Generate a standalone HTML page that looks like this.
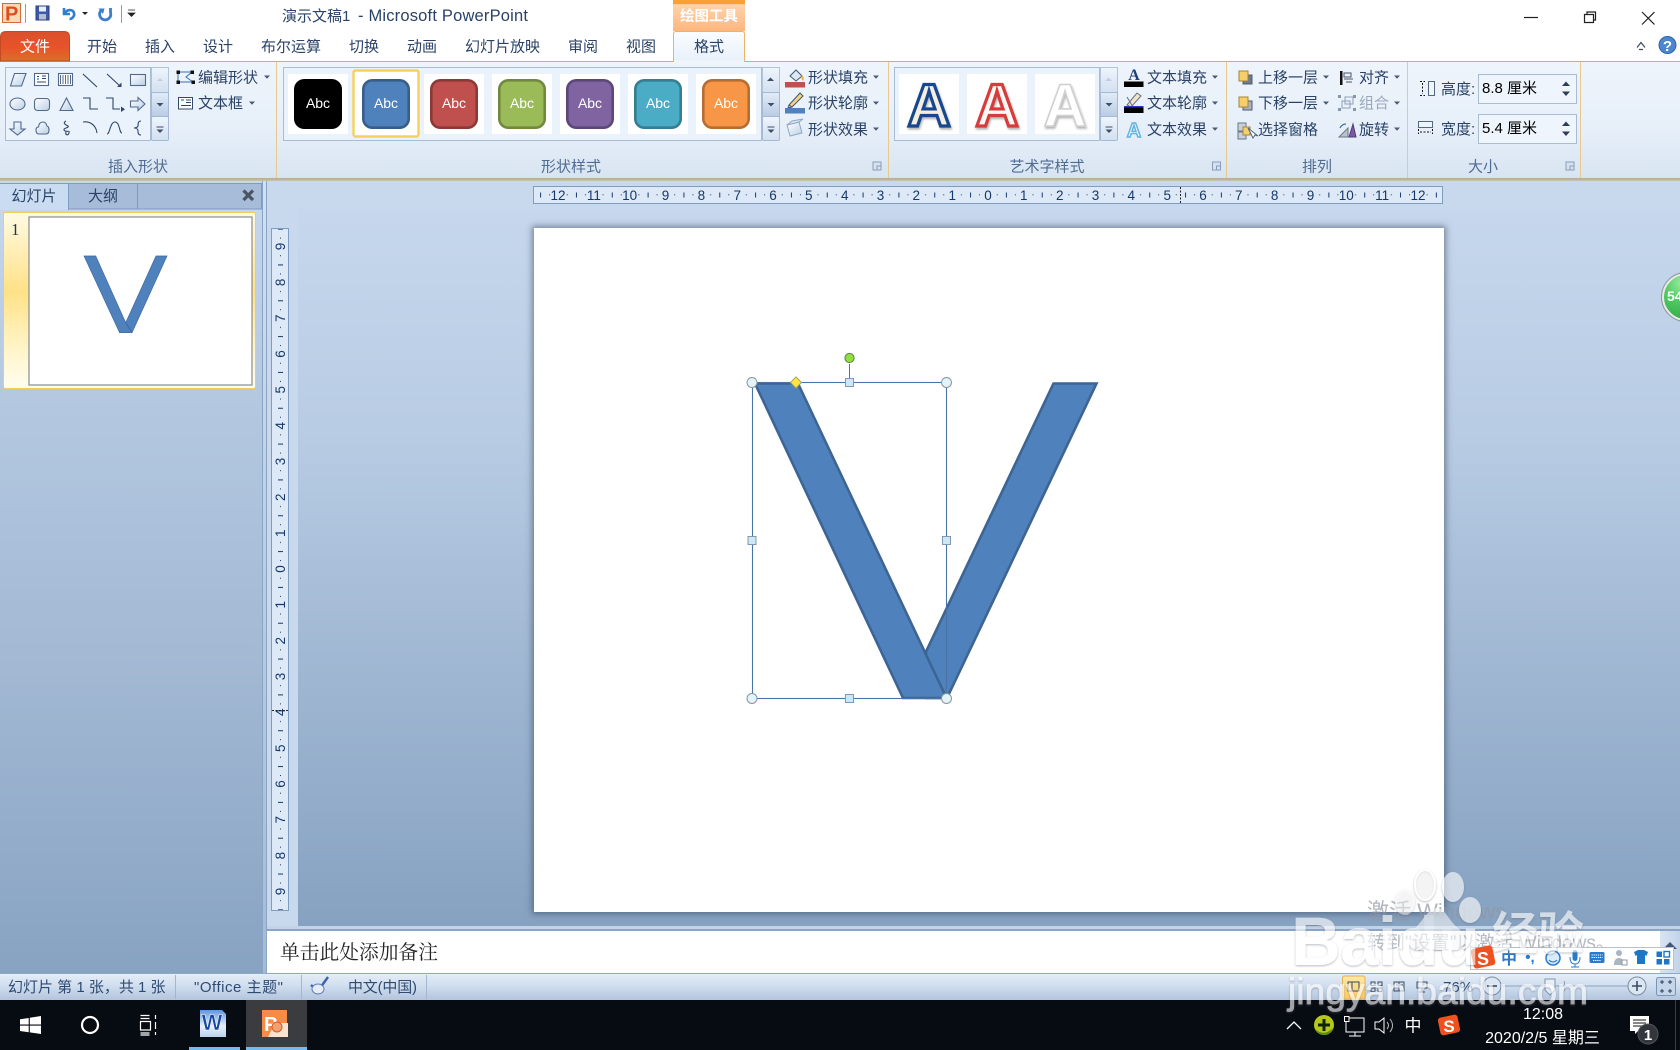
<!DOCTYPE html>
<html lang="zh-CN">
<head>
<meta charset="utf-8">
<title>演示文稿1 - Microsoft PowerPoint</title>
<style>
html,body{margin:0;padding:0;width:1680px;height:1050px;overflow:hidden;background:#fff}
.a{position:absolute}
svg{position:absolute;left:0;top:0}
text{font-family:"Liberation Sans","Noto Sans CJK SC",sans-serif;font-size:15px;fill:#2a4266}
.m{text-anchor:middle}
.lab{fill:#4f6c92;text-anchor:middle}
.rul{fill:#17386a;font-size:13.5px;text-anchor:middle}
.abc{fill:#fff;font-size:14px;text-anchor:middle}
.st{fill:#2f4b72;font-size:15px}
.wh{fill:#fff}
</style>
</head>
<body>
<!-- backgrounds -->
<div class="a" style="left:0;top:0;width:1680px;height:61px;background:#fff"></div>
<div class="a" style="left:0;top:61px;width:1680px;height:117px;background:linear-gradient(#eef4fb,#e6eff9 60%,#d8e4f1);border-top:1px solid #e9a94a;box-sizing:border-box"></div>
<div class="a" style="left:0;top:178px;width:1680px;height:4px;background:linear-gradient(#b9ab90,#c4b79f 50%,#c6d6ea)"></div>
<div class="a" style="left:0;top:181px;width:262px;height:793px;background:linear-gradient(#c6d8ee,#b5c9e1 25%,#a3b9d4 60%,#87a3c2)"></div>
<div class="a" style="left:262px;top:181px;width:5px;height:793px;background:linear-gradient(#d2e0f1,#a6bad3);border-left:1px solid #8aa4c6;border-right:1px solid #8aa4c6;box-sizing:border-box"></div>
<div class="a" style="left:267px;top:181px;width:1413px;height:746px;background:linear-gradient(#c8d9ee,#b7cbe3 35%,#9cb4d0 70%,#86a2c1)"></div>
<div class="a" style="left:267px;top:181px;width:1413px;height:27px;background:#c8d9ee"></div>
<div class="a" style="left:267px;top:181px;width:31px;height:746px;background:#c8d9ee"></div>
<div class="a" style="left:534px;top:228px;width:910px;height:684px;background:#fff;box-shadow:0 0 6px 2px rgba(40,55,80,.5)"></div>
<div class="a" style="left:267px;top:926px;width:1413px;height:5px;background:#c3d3e7;border-bottom:2px solid #89a4c7;box-sizing:border-box"></div>
<div class="a" style="left:267px;top:931px;width:1393px;height:42px;background:#fff"></div>
<div class="a" style="left:1660px;top:931px;width:20px;height:42px;background:linear-gradient(90deg,#d8e4f2,#c3d4e8)"></div>
<div class="a" style="left:0;top:973px;width:1680px;height:27px;background:linear-gradient(#e5edf7,#d0deef 45%,#b2c5dd);border-top:1px solid #8fa9ca;box-sizing:border-box"></div>
<div class="a" style="left:0;top:1000px;width:1680px;height:50px;background:#070b12"></div>

<svg width="1680" height="1050" viewBox="0 0 1680 1050">
<defs>
<linearGradient id="gf" x1="0" y1="0" x2="0" y2="1"><stop offset="0" stop-color="#d9512c"/><stop offset=".55" stop-color="#e8532a"/><stop offset="1" stop-color="#dc6f27"/></linearGradient>
<linearGradient id="gc" x1="0" y1="0" x2="0" y2="1"><stop offset="0" stop-color="#f9a137"/><stop offset=".13" stop-color="#f9a137"/><stop offset=".14" stop-color="#ffd3aa"/><stop offset="1" stop-color="#fdb67e"/></linearGradient>
<linearGradient id="gt" x1="0" y1="0" x2="0" y2="1"><stop offset="0" stop-color="#fbfdff"/><stop offset="1" stop-color="#e7f0fa"/></linearGradient>
<linearGradient id="gb" x1="0" y1="0" x2="0" y2="1"><stop offset="0" stop-color="#eef5fc"/><stop offset="1" stop-color="#d3e0f0"/></linearGradient>
<linearGradient id="gbh" x1="0" y1="0" x2="0" y2="1"><stop offset="0" stop-color="#e2ecf8"/><stop offset="1" stop-color="#b9cce4"/></linearGradient>
<linearGradient id="gs" x1="0" y1="0" x2="1" y2="1"><stop offset="0" stop-color="#fff"/><stop offset="1" stop-color="#bcd0e6"/></linearGradient>
<linearGradient id="gth" x1="0" y1="0" x2="0" y2="1"><stop offset="0" stop-color="#fffbe2"/><stop offset=".45" stop-color="#ffe187"/><stop offset=".7" stop-color="#fff1bb"/><stop offset="1" stop-color="#fffdf0"/></linearGradient>
<linearGradient id="gv" x1="0" y1="0" x2="0" y2="1"><stop offset="0" stop-color="#ffe9a8"/><stop offset="1" stop-color="#fdc961"/></linearGradient>
<linearGradient id="gw" x1="0" y1="0" x2="0" y2="1"><stop offset="0" stop-color="#5a98e6"/><stop offset=".6" stop-color="#e6f0fb"/><stop offset="1" stop-color="#b9d2ef"/></linearGradient>
<radialGradient id="gg" cx=".4" cy=".2" r=".8"><stop offset="0" stop-color="#9aeaa0"/><stop offset=".45" stop-color="#52cc62"/><stop offset="1" stop-color="#38ad4c"/></radialGradient>
<pattern id="hp" x="988" y="186" width="35.83" height="18" patternUnits="userSpaceOnUse">
<rect x="8.7" y="8.3" width="1" height="1" fill="#17386a"/><rect x="17.9" y="6.5" width="1" height="5" fill="#17386a"/><rect x="26.9" y="8.3" width="1" height="1" fill="#17386a"/></pattern>
<pattern id="vp" x="272" y="569" width="18" height="35.83" patternUnits="userSpaceOnUse">
<rect x="8" y="8.7" width="1" height="1" fill="#17386a"/><rect x="6" y="17.9" width="5" height="1" fill="#17386a"/><rect x="8" y="26.9" width="1" height="1" fill="#17386a"/></pattern>
<path id="c" d="M-3 -1.5H3L0 1.7Z" fill="#4a5a72"/>
<g id="sb">
<rect x=".5" y=".5" width="17" height="25" fill="url(#gb)" stroke="#b2c4dc"/>
<rect x=".5" y="25.5" width="17" height="24" fill="url(#gbh)" stroke="#a4b9d5"/>
<rect x=".5" y="49.5" width="17" height="24" rx="1.5" fill="url(#gb)" stroke="#a4b9d5"/>
<path d="M5.5 39H12.5L9 35.5Z" transform="rotate(180 9 37.5)" fill="#3e4f68"/>
<path d="M5.5 60H12.5" stroke="#3e4f68"/><path d="M5.5 62.5H12.5L9 66Z" fill="#3e4f68"/>
</g>
<filter id="ws" x="-5%" y="-10%" width="110%" height="125%"><feDropShadow dx="0" dy="1" stdDeviation="1" flood-color="#5c6470" flood-opacity=".7"/></filter>
<filter id="as" x="-15%" y="-15%" width="130%" height="130%"><feDropShadow dx="1" dy="2" stdDeviation="1" flood-color="#555" flood-opacity=".45"/></filter>
</defs>

<!-- QAT -->
<rect x="2.5" y="3.5" width="18" height="19" fill="#fbd7bb" stroke="#d76a34"/>
<text x="5" y="20.5" style="font-size:20px;font-weight:bold;fill:#d9501c">P</text>
<path d="M25.5 4V23M121.5 5V23" stroke="#9a9a9a"/>
<rect x="36" y="6" width="13" height="14" fill="#3d5aa8" stroke="#2b3f7c"/><rect x="39" y="6.5" width="7" height="5" fill="#e8eefa"/><rect x="39" y="14" width="7" height="5.5" fill="#b7bcd0"/>
<path d="M64 8V14H70M64.5 13.5C67 9 73 9 74 13C75 16 72 19 69.5 19" fill="none" stroke="#2f7ed0" stroke-width="2.6"/>
<path d="M82 12H88L85 15Z" fill="#222"/>
<path d="M101 10.5A5.6 5.6 0 1 0 110.5 12.5V8" fill="none" stroke="#3b7fcb" stroke-width="2.8"/><path d="M98.5 8.5H104.5L103 14Z" fill="#3b7fcb"/>
<path d="M128 10H135M128 13H135L131.5 16.5Z" fill="#222" stroke="#222" stroke-width=".7"/>
<text x="282" y="21">演示文稿1</text>
<text x="358" y="21" textLength="170" style="font-size:16.5px">- Microsoft PowerPoint</text>

<!-- window controls -->
<path d="M1524 17.5H1538" stroke="#222" stroke-width="1.2"/>
<path d="M1584.5 14.5H1593.5V22.5H1584.5ZM1587 14.5V12H1595.5V20H1593.5" fill="none" stroke="#222" stroke-width="1.2"/>
<path d="M1642 12L1654.5 24.5M1654.5 12L1642 24.5" stroke="#222" stroke-width="1.2"/>
<path d="M1637 47.5L1641 42.5L1645 47.5M1639 49.5H1643" fill="none" stroke="#3d4a5c" stroke-width="1.2"/>
<circle cx="1667.5" cy="45" r="8.5" fill="#4d86cc" stroke="#2c66ad"/>
<text class="m" x="1667.5" y="51" style="fill:#fff;font-weight:bold;font-size:15px">?</text>

<!-- tabs -->
<path d="M0.5 61V37Q0.5 31.5 6 31.5H64Q69.5 31.5 69.5 37V61Z" fill="url(#gf)" stroke="#c24a22"/>
<text class="m wh" x="35" y="51.5">文件</text>
<rect x="673" y="0" width="72" height="31" fill="url(#gc)"/>
<text class="m wh" x="709" y="21" style="font-weight:bold;font-size:14.5px">绘图工具</text>
<path d="M673.5 62V34Q673.5 31.5 676 31.5H742Q744.5 31.5 744.5 34V62" fill="url(#gt)" stroke="#efb262"/>
<rect x="674" y="60" width="70" height="3" fill="#eef4fb"/>
<g class="tabs">
<text class="m" x="102" y="51.5">开始</text><text class="m" x="160" y="51.5">插入</text><text class="m" x="218" y="51.5">设计</text>
<text class="m" x="291" y="51.5">布尔运算</text><text class="m" x="364" y="51.5">切换</text><text class="m" x="422" y="51.5">动画</text>
<text class="m" x="502.5" y="51.5">幻灯片放映</text><text class="m" x="583" y="51.5">审阅</text><text class="m" x="641" y="51.5">视图</text>
<text class="m" x="709" y="51.5">格式</text>
</g>

<!-- group separators -->
<path d="M276.5 62V178M888.5 62V178M1226.5 62V178M1407.5 62V178M1580.5 62V178" stroke="#e9c88d"/>

<!-- shapes gallery -->
<rect x="5.5" y="67.5" width="145" height="73" fill="#eaf3fc" stroke="#a9bcd6"/>
<use href="#sb" x="151" y="67"/>
<path d="M157 81H163L160 78Z" fill="#c3cedd"/>
<g fill="url(#gs)" stroke="#50698c" stroke-width="1.1">
<path d="M10.5 86L14.5 73.5H26L21.5 86Z"/>
<rect x="34.5" y="73.5" width="14" height="12" fill="#fff"/>
<rect x="58.5" y="73.5" width="14" height="12" fill="#fff"/>
<rect x="130.5" y="74.5" width="15" height="11"/>
<ellipse cx="17.5" cy="104" rx="7.5" ry="6"/>
<rect x="34.5" y="98.5" width="15" height="12" rx="3"/>
<path d="M66.5 98L73 110.5H60Z"/>
<path d="M130.5 101H138V97.5L145 104L138 110.5V107H130.5Z"/>
<path d="M14 122H21V129H25L17.5 135L10 129H14Z"/>
<path d="M36 130Q36 127 38.5 127Q39 122 43 122Q46 122 47 126Q49 126.5 49 130Q49 134 46 134H39Q36 134 36 130Z"/>
</g>
<g fill="none" stroke="#2f4668" stroke-width="1.1">
<path d="M83 74L97 87M107 74L120 86"/>
<path d="M83 98H90V109H98M106 98H113V109H120"/>
<path d="M66 121C62 123 66 125 68 126C70 128 61 128 65 131C67 132 70 130 69 133C68 136 65 135 66 132"/>
<path d="M83 122C90 121 96 125 97 133M107 134C110 134 110 122 115 122C120 122 119 133 122 133M141 121C138 121 138 124 138 126C138 127 136 128 134 128C136 128 138 129 138 131C138 133 138 135 141 135"/>
<path d="M37 76.5H39M37 79H39M42 76H46M42 78.5H46M37 82H46" stroke-width=".9"/>
<path d="M60.5 75V84M63 75V84M65.5 75V84M68 75V84M70.5 75V84" stroke-width=".8"/>
</g>
<path d="M117 87H121.5V82.5ZM121 106.5V112L125 109.2Z" fill="#2f4668"/>

<!-- edit shape / textbox -->
<path d="M178 72H192L186 77L193 82H178Z" fill="none" stroke="#3a6fb5"/>
<g fill="#111"><rect x="176.5" y="70.5" width="3.5" height="3.5"/><rect x="190.5" y="70.5" width="3.5" height="3.5"/><rect x="176.5" y="80.5" width="3.5" height="3.5"/><rect x="191.5" y="80.5" width="3.5" height="3.5"/></g>
<text x="198" y="82.5">编辑形状</text><use href="#c" x="267" y="77"/>
<rect x="178.5" y="97.5" width="14" height="11.5" fill="#fff" stroke="#33496a"/>
<path d="M181 100H184M186 100H191M186 102.5H191M181 105.5H191" stroke="#33496a"/>
<text x="198" y="108">文本框</text><use href="#c" x="252" y="103"/>
<text class="lab" x="138" y="171.5">插入形状</text>

<!-- shape styles gallery -->
<rect x="283.5" y="67.5" width="478" height="73" fill="#eaf3fc" stroke="#a9bcd6"/>
<use href="#sb" x="762" y="67"/>
<path d="M767 81H774L770.5 77.5Z" fill="#3e4f68"/>
<g fill="#fff">
<rect x="288" y="74" width="60" height="60"/><rect x="424" y="74" width="60" height="60"/><rect x="492" y="74" width="60" height="60"/><rect x="560" y="74" width="60" height="60"/><rect x="628" y="74" width="60" height="60"/><rect x="696" y="74" width="60" height="60"/>
</g>
<rect x="353.5" y="70.5" width="65" height="66" rx="2" fill="#fff" stroke="#f7d15d" stroke-width="2.4"/>
<g stroke-width="2.6">
<rect x="295.3" y="80.3" width="45.4" height="47.4" rx="9" fill="#000" stroke="#000"/>
<rect x="363.3" y="80.3" width="45.4" height="47.4" rx="9" fill="#4f81bd" stroke="#385d8a"/>
<rect x="431.3" y="80.3" width="45.4" height="47.4" rx="9" fill="#c0504d" stroke="#8c3836"/>
<rect x="499.3" y="80.3" width="45.4" height="47.4" rx="9" fill="#9bbb59" stroke="#71893f"/>
<rect x="567.3" y="80.3" width="45.4" height="47.4" rx="9" fill="#8064a2" stroke="#5c4776"/>
<rect x="635.3" y="80.3" width="45.4" height="47.4" rx="9" fill="#4bacc6" stroke="#357d91"/>
<rect x="703.3" y="80.3" width="45.4" height="47.4" rx="9" fill="#f79646" stroke="#b66d31"/>
</g>
<text class="abc" x="318" y="108">Abc</text><text class="abc" x="386" y="108">Abc</text><text class="abc" x="454" y="108">Abc</text><text class="abc" x="522" y="108">Abc</text><text class="abc" x="590" y="108">Abc</text><text class="abc" x="658" y="108">Abc</text><text class="abc" x="726" y="108">Abc</text>

<!-- shape style buttons -->
<path d="M790 76L796 70L802 76L796 81Z" fill="#dfe8f2" stroke="#3f5878"/><path d="M802 75Q805 78 803 81Q800 78 802 75Z" fill="#f2b530"/>
<rect x="785" y="82" width="20" height="5.5" fill="#c0504d"/>
<path d="M789 105L800 93L803 96L792 107ZM789 105L788 108L792 107" fill="#f2d486" stroke="#44556e"/>
<rect x="785" y="108" width="20" height="5.5" fill="#4f81bd"/>
<path d="M787 125L799 122L802 133L790 136Z" fill="url(#gs)" stroke="#8fa8c6"/><path d="M787 125L792 121L803 119L799 122Z" fill="#dce6f2" stroke="#8fa8c6"/>
<text x="808" y="82.5">形状填充</text><text x="808" y="108">形状轮廓</text><text x="808" y="134.5">形状效果</text>
<use href="#c" x="876" y="77"/><use href="#c" x="876" y="103"/><use href="#c" x="876" y="129"/>
<text class="lab" x="571" y="171.5">形状样式</text>
<path d="M873 162H881V170H873ZM873 162V170M877 166H881V170H877Z" fill="#d6e2f0" stroke="#8a9db6"/>

<!-- wordart -->
<rect x="894.5" y="67.5" width="205" height="73" fill="#eaf3fc" stroke="#a9bcd6"/>
<use href="#sb" x="1100" y="67"/>
<path d="M1105 81H1112L1108.5 77.5Z" fill="#c3cedd"/>
<rect x="899" y="74" width="60" height="60" fill="#fff"/><rect x="967" y="74" width="60" height="60" fill="#fff"/><rect x="1035" y="74" width="60" height="60" fill="#fff"/>
<text class="m" x="929" y="126" filter="url(#as)" style="font-size:60px;font-weight:bold;fill:#f5efe2;stroke:#17478f;stroke-width:3.2">A</text>
<text class="m" x="997" y="126" filter="url(#as)" style="font-size:60px;font-weight:bold;fill:#fbf7f4;stroke:#d83a3a;stroke-width:3.2">A</text>
<text class="m" x="1065" y="126" filter="url(#as)" style="font-size:60px;font-weight:bold;fill:#fff;stroke:#d0d0d0;stroke-width:1.6">A</text>

<text class="m" x="1134" y="80" style="font-size:16px;font-family:'Liberation Serif',serif;font-weight:bold;fill:#1e3f78">A</text>
<rect x="1124" y="81.5" width="19.5" height="5.5" fill="#000"/>
<path d="M1127 105L1137 93L1141 96L1131 107ZM1127 97L1133 107" fill="#efe4c8" stroke="#64708a"/>
<rect x="1124" y="107.5" width="19.5" height="5.5" fill="#000"/><rect x="1124" y="106" width="19.5" height="1.5" fill="#2b38c8"/>
<text class="m" x="1134" y="137" style="font-size:20px;font-weight:bold;fill:#e9f5fd;stroke:#63b2e2;stroke-width:1.4">A</text>
<text x="1147" y="82.5">文本填充</text><text x="1147" y="108">文本轮廓</text><text x="1147" y="134.5">文本效果</text>
<use href="#c" x="1215" y="77"/><use href="#c" x="1215" y="103"/><use href="#c" x="1215" y="129"/>
<text class="lab" x="1047" y="171.5">艺术字样式</text>
<path d="M1212.5 162H1220.5V170H1212.5ZM1216.5 166H1220.5V170H1216.5Z" fill="#d6e2f0" stroke="#8a9db6"/>

<!-- arrange -->
<rect x="1243" y="75" width="9" height="9" fill="#6b7a90" stroke="#4f5c70"/><rect x="1239" y="71" width="9" height="10" fill="#f6cf6a" stroke="#a58435"/>
<rect x="1243" y="101" width="9" height="9" fill="#a7b2c2" stroke="#4f5c70"/><rect x="1239" y="97" width="9" height="10" fill="#f6cf6a" stroke="#a58435"/>
<rect x="1238" y="123" width="8" height="8" fill="#c8d0da" stroke="#6a7688"/><rect x="1238" y="132" width="8" height="7" fill="#c8d0da" stroke="#6a7688"/><rect x="1243" y="127" width="7" height="8" fill="#f6cf6a" stroke="#a58435"/><path d="M1248 128L1253 138L1255 135L1258 136Z" fill="#fff" stroke="#556479"/>
<text x="1258" y="82.5">上移一层</text><text x="1258" y="108">下移一层</text><text x="1258" y="134.5">选择窗格</text>
<use href="#c" x="1326" y="77"/><use href="#c" x="1326" y="103"/>
<rect x="1340" y="71" width="2.5" height="14" fill="#111"/><path d="M1344 73H1351V77H1344ZM1344 79H1353M1346 82H1352" fill="none" stroke="#46556d"/>
<g fill="none" stroke="#8ea0b8"><rect x="1345" y="97" width="8" height="7"/><rect x="1342" y="101" width="8" height="7"/></g>
<g fill="#8496ae"><rect x="1338" y="95" width="3" height="3"/><rect x="1353" y="95" width="3" height="3"/><rect x="1338" y="108" width="3" height="3"/><rect x="1353" y="108" width="3" height="3"/></g>
<path d="M1339 137L1348 128V137Z" fill="#b9c2cd" stroke="#6c7888"/><path d="M1349 137L1353 124L1356 137Z" fill="#7e57a8" stroke="#55397a"/><path d="M1340 128Q1342 124 1346 124" fill="none" stroke="#3b72b8" stroke-width="1.2"/>
<text x="1359" y="82.5">对齐</text><text x="1359" y="108" style="fill:#9aa8ba">组合</text><text x="1359" y="134.5">旋转</text>
<use href="#c" x="1397" y="77"/><use href="#c" x="1397" y="103"/><use href="#c" x="1397" y="129"/>
<text class="lab" x="1317" y="171.5">排列</text>

<!-- size -->
<rect x="1428.5" y="81.5" width="6" height="14" fill="#f0f5fb" stroke="#55687f"/><path d="M1420 81.5H1425M1420 95.5H1425M1422.5 83V94" stroke="#111" stroke-dasharray="2 1.5"/>
<rect x="1418.5" y="121.5" width="14" height="6" fill="#f0f5fb" stroke="#55687f"/><path d="M1418.5 129V134M1432.5 129V134M1420 132H1431" stroke="#111" stroke-dasharray="2 1.5"/>
<text x="1441" y="94">高度:</text><text x="1441" y="134">宽度:</text>
<rect x="1478.5" y="74.5" width="98" height="29" fill="#eff5fc" stroke="#a9bcd6"/>
<rect x="1478.5" y="114.5" width="98" height="29" fill="#eff5fc" stroke="#a9bcd6"/>
<text x="1482" y="93" style="fill:#000">8.8 厘米</text><text x="1482" y="133" style="fill:#000">5.4 厘米</text>
<g fill="#2c3e5c"><path d="M1562 86H1570L1566 81.5Z"/><path d="M1562 91.5H1570L1566 96Z"/><path d="M1562 126H1570L1566 121.5Z"/><path d="M1562 131.5H1570L1566 136Z"/></g>
<text class="lab" x="1483" y="171.5">大小</text>
<path d="M1566 162H1574V170H1566ZM1570 166H1574V170H1570Z" fill="#d6e2f0" stroke="#8a9db6"/>

<!-- left pane tabs -->
<rect x="0" y="183" width="262" height="26" fill="#a6bcd8"/>
<path d="M0 183.5H262M68.5 209H262M137.5 183V209M261.5 183V209" stroke="#7e9bc2" fill="none"/>
<path d="M0 184H68V210H0Z" fill="#c9dcf2"/><path d="M68.5 183V210" stroke="#7e9bc2"/>
<text class="m" x="34" y="201">幻灯片</text><text class="m" x="103" y="201">大纲</text>
<path d="M243.5 190.5L253 200M253 190.5L243.5 200" stroke="#4b5462" stroke-width="3.2"/>

<!-- thumbnail -->
<rect x="3.5" y="212.5" width="252" height="176" rx="2" fill="url(#gth)" stroke="#f3cd58"/>
<rect x="29" y="217" width="223" height="168" fill="#fff" stroke="#878c93" stroke-width="1.2"/>
<text x="11" y="235" style="font-family:'Liberation Serif',serif;font-size:17px;fill:#1f3557">1</text>
<path d="M84 256H95.7L125.7 322.7L156 256H167L132 332.7H119.6Z" fill="#4f81bd" stroke="#3f6a9f" stroke-width=".7"/>
<path d="M125.7 322.7L132 332.7" stroke="#3f6a9f"/>

<!-- horizontal ruler -->
<rect x="533.5" y="186.5" width="909" height="17" fill="#dde9f6" stroke="#7f9cc2"/>
<rect x="534" y="187" width="908" height="16" fill="url(#hp)"/>
<g class="rulers">
<rect x="552" y="188" width="13" height="14" fill="#dde9f6"/><rect x="587" y="188" width="13" height="14" fill="#dde9f6"/><rect x="624" y="188" width="13" height="14" fill="#dde9f6"/><rect x="660" y="188" width="11" height="14" fill="#dde9f6"/><rect x="696" y="188" width="11" height="14" fill="#dde9f6"/><rect x="732" y="188" width="11" height="14" fill="#dde9f6"/><rect x="768" y="188" width="10" height="14" fill="#dde9f6"/><rect x="804" y="188" width="10" height="14" fill="#dde9f6"/><rect x="840" y="188" width="10" height="14" fill="#dde9f6"/><rect x="875" y="188" width="11" height="14" fill="#dde9f6"/><rect x="911" y="188" width="11" height="14" fill="#dde9f6"/><rect x="947" y="188" width="11" height="14" fill="#dde9f6"/><rect x="983" y="188" width="10" height="14" fill="#dde9f6"/><rect x="1019" y="188" width="10" height="14" fill="#dde9f6"/><rect x="1054" y="188" width="11" height="14" fill="#dde9f6"/><rect x="1090" y="188" width="11" height="14" fill="#dde9f6"/><rect x="1126" y="188" width="11" height="14" fill="#dde9f6"/><rect x="1162" y="188" width="11" height="14" fill="#dde9f6"/><rect x="1198" y="188" width="10" height="14" fill="#dde9f6"/><rect x="1234" y="188" width="10" height="14" fill="#dde9f6"/><rect x="1269" y="188" width="11" height="14" fill="#dde9f6"/><rect x="1305" y="188" width="11" height="14" fill="#dde9f6"/><rect x="1340" y="188" width="13" height="14" fill="#dde9f6"/><rect x="1376" y="188" width="13" height="14" fill="#dde9f6"/><rect x="1412" y="188" width="13" height="14" fill="#dde9f6"/>
<text class="rul" x="558" y="200">12</text><text class="rul" x="593.9" y="200">11</text><text class="rul" x="629.7" y="200">10</text><text class="rul" x="665.5" y="200">9</text><text class="rul" x="701.4" y="200">8</text><text class="rul" x="737.2" y="200">7</text><text class="rul" x="773" y="200">6</text><text class="rul" x="808.8" y="200">5</text><text class="rul" x="844.7" y="200">4</text><text class="rul" x="880.5" y="200">3</text><text class="rul" x="916.3" y="200">2</text><text class="rul" x="952.2" y="200">1</text><text class="rul" x="988" y="200">0</text><text class="rul" x="1023.8" y="200">1</text><text class="rul" x="1059.7" y="200">2</text><text class="rul" x="1095.5" y="200">3</text><text class="rul" x="1131.3" y="200">4</text><text class="rul" x="1167.2" y="200">5</text><text class="rul" x="1203" y="200">6</text><text class="rul" x="1238.8" y="200">7</text><text class="rul" x="1274.6" y="200">8</text><text class="rul" x="1310.5" y="200">9</text><text class="rul" x="1346.3" y="200">10</text><text class="rul" x="1382.1" y="200">11</text><text class="rul" x="1418" y="200">12</text>
</g>
<path d="M1180.5 187V203" stroke="#222" stroke-dasharray="2 1.5"/>

<!-- vertical ruler -->
<rect x="271.5" y="228.5" width="17" height="682" fill="#dde9f6" stroke="#7f9cc2"/>
<rect x="272" y="229" width="16" height="681" fill="url(#vp)"/>
<g fill="#dde9f6"><rect x="274" y="241" width="13" height="11"/><rect x="274" y="277" width="13" height="11"/><rect x="274" y="313" width="13" height="11"/><rect x="274" y="349" width="13" height="11"/><rect x="274" y="384" width="13" height="11"/><rect x="274" y="420" width="13" height="11"/><rect x="274" y="456" width="13" height="11"/><rect x="274" y="492" width="13" height="11"/><rect x="274" y="528" width="13" height="11"/><rect x="274" y="564" width="13" height="11"/><rect x="274" y="599" width="13" height="11"/><rect x="274" y="635" width="13" height="11"/><rect x="274" y="671" width="13" height="11"/><rect x="274" y="707" width="13" height="11"/><rect x="274" y="743" width="13" height="11"/><rect x="274" y="779" width="13" height="11"/><rect x="274" y="814" width="13" height="11"/><rect x="274" y="850" width="13" height="11"/><rect x="274" y="886" width="13" height="11"/></g>
<g>
<text class="rul" transform="translate(285,246.5) rotate(-90)">9</text><text class="rul" transform="translate(285,282.4) rotate(-90)">8</text><text class="rul" transform="translate(285,318.2) rotate(-90)">7</text><text class="rul" transform="translate(285,354) rotate(-90)">6</text><text class="rul" transform="translate(285,389.8) rotate(-90)">5</text><text class="rul" transform="translate(285,425.7) rotate(-90)">4</text><text class="rul" transform="translate(285,461.5) rotate(-90)">3</text><text class="rul" transform="translate(285,497.3) rotate(-90)">2</text><text class="rul" transform="translate(285,533.2) rotate(-90)">1</text><text class="rul" transform="translate(285,569) rotate(-90)">0</text><text class="rul" transform="translate(285,604.8) rotate(-90)">1</text><text class="rul" transform="translate(285,640.7) rotate(-90)">2</text><text class="rul" transform="translate(285,676.5) rotate(-90)">3</text><text class="rul" transform="translate(285,712.3) rotate(-90)">4</text><text class="rul" transform="translate(285,748.2) rotate(-90)">5</text><text class="rul" transform="translate(285,784) rotate(-90)">6</text><text class="rul" transform="translate(285,819.8) rotate(-90)">7</text><text class="rul" transform="translate(285,855.6) rotate(-90)">8</text><text class="rul" transform="translate(285,891.5) rotate(-90)">9</text>
</g>
<path d="M272 710.5H288" stroke="#222" stroke-dasharray="2 1.5"/>

<!-- main V -->
<path d="M1053.5 383.5H1096.5L947 698H926.5L926 651.7Z" fill="#4f81bd" stroke="#3d6594" stroke-width="2.6" stroke-linejoin="miter"/>
<path d="M755 383.5H798L946.5 698H903Z" fill="#4f81bd" stroke="#3d6594" stroke-width="2.6"/>
<rect x="752.5" y="382.5" width="194" height="316" fill="none" stroke="#4a74a5" stroke-width="1.1"/>
<path d="M849.5 364V382" stroke="#4a74a5"/>
<circle cx="849.5" cy="358" r="4.6" fill="#8fe03c" stroke="#5e7f4a"/>
<g fill="#e2f4f7" stroke="#8a969e">
<circle cx="752" cy="382.5" r="5"/><circle cx="946.5" cy="382.5" r="5"/><circle cx="752" cy="698.5" r="5"/><circle cx="946.5" cy="698.5" r="5"/>
</g>
<g fill="#cfe7f5" stroke="#7f9ab4">
<rect x="845.5" y="378.5" width="8" height="8"/><rect x="845.5" y="694.5" width="8" height="8"/><rect x="748" y="536.5" width="8" height="8"/><rect x="942.5" y="536.5" width="8" height="8"/>
</g>
<path d="M796 377L801.5 382.5L796 388L790.5 382.5Z" fill="#ffe640" stroke="#a9a25a"/>

<!-- green ball -->
<circle cx="1686" cy="297" r="23" fill="url(#gg)" stroke="#e8e8e8" stroke-width="2"/>
<circle cx="1686" cy="297" r="24.5" fill="none" stroke="#8d959d" stroke-width="1"/>
<text x="1667" y="301" style="font-size:14px;font-weight:bold;fill:#fff">54</text>

<!-- notes -->
<text x="280" y="959" style="font-family:'Liberation Serif','Noto Serif CJK SC',serif;font-size:19.75px;fill:#222">单击此处添加备注</text>
<path d="M1663 949H1677L1670 942Z" fill="#43587a"/>

<!-- status bar -->
<text class="st" x="8" y="992">幻灯片 第 1 张，共 1 张</text>
<text class="st" x="194" y="992" textLength="89">"Office 主题"</text>
<text class="st" x="348" y="992" textLength="69">中文(中国)</text>
<path d="M175.5 975V999M301.5 975V999M426.5 975V999" stroke="#a2b6d0"/>
<path d="M311 985L318 991L328 977" fill="none" stroke="#3b62a8" stroke-width="2.4"/>
<ellipse cx="318" cy="989" rx="6" ry="5" fill="#e6ecf5" stroke="#5d80b8"/>

<rect x="1342.5" y="976" width="22.5" height="23" rx="2" fill="url(#gv)" stroke="#e3b156"/>
<g fill="none" stroke="#3a4b63">
<rect x="1348" y="982" width="11" height="9"/><path d="M1352 982V991"/>
<rect x="1371" y="982" width="4" height="3.5"/><rect x="1378" y="982" width="4" height="3.5"/><rect x="1371" y="988" width="4" height="3.5"/><rect x="1378" y="988" width="4" height="3.5"/>
<rect x="1394" y="982" width="10" height="9"/><path d="M1399 982V991M1396 985H1398M1400 985H1403"/>
<rect x="1417" y="982" width="10" height="6"/><path d="M1422 988V992M1419 992H1425"/>
</g>
<text class="st" x="1443" y="992" style="font-size:15px">76%</text>
<circle cx="1492" cy="986" r="9" fill="#dbe6f3" stroke="#7b8ca3"/><path d="M1487 986H1497" stroke="#3a4b63" stroke-width="1.6"/>
<path d="M1502 986H1628" stroke="#8ea2bd"/><path d="M1564.5 981V991" stroke="#8ea2bd"/>
<path d="M1545 979H1555V990L1550 995L1545 990Z" fill="#e7eef7" stroke="#8294ad"/>
<circle cx="1637" cy="986" r="9" fill="#dbe6f3" stroke="#7b8ca3"/><path d="M1632 986H1642M1637 981V991" stroke="#3a4b63" stroke-width="1.6"/>
<rect x="1656.5" y="977.5" width="19" height="18" rx="2" fill="#c6d6ea" stroke="#7b93b5"/>
<path d="M1660 982H1664M1662 980V984M1668 982H1672M1670 980V984M1660 991H1664M1662 989V993M1668 991H1672M1670 989V993" stroke="#2c3e5c"/>

<!-- taskbar -->
<g fill="#fff"><path d="M20 1019.3L28.7 1018V1024.5H20ZM29.8 1017.8L41 1016V1024.5H29.8ZM20 1025.6H28.7V1032.2L20 1031ZM29.8 1025.6H41V1034L29.8 1032.4Z"/></g>
<circle cx="90" cy="1025" r="8" fill="none" stroke="#fff" stroke-width="2.2"/>
<path d="M140.5 1015.5H149.5M140.5 1018.5H149.5M140.5 1021.5H150.5V1030H140.5ZM140.5 1033H149.5M140.5 1035H149.5M155.5 1015V1019M155.5 1022V1029M155.5 1032V1035" fill="none" stroke="#fff" stroke-width="1.2"/>
<path d="M200 1010H222L226 1014V1037H200Z" fill="url(#gw)"/>
<text class="m" x="212" y="1030" style="font-size:22px;font-weight:bold;fill:#17479e;stroke:#fff;stroke-width:.5">W</text>
<rect x="189" y="1047" width="51" height="3" fill="#76b9ed"/>
<rect x="246" y="1000" width="61" height="50" fill="#3a3c40"/>
<rect x="246" y="1047" width="61" height="3" fill="#76b9ed"/>
<path d="M262 1010H287V1037H262Z" fill="#f78b48"/><path d="M275 1023H288V1037H268Z" fill="#fbe3d2"/>
<text x="264" y="1031" style="font-size:20px;font-weight:bold;fill:#fff">P</text>
<circle cx="277" cy="1027" r="5" fill="#f2a070" stroke="#d45d24"/>

<!-- tray -->
<path d="M1287 1029L1294 1022L1301 1029" fill="none" stroke="#fff" stroke-width="1.3"/>
<circle cx="1324" cy="1025" r="10" fill="#b5c81a"/><path d="M1315 1029Q1324 1037 1333 1028Q1330 1036 1323 1035Q1317 1034 1315 1029Z" fill="#5f8a10"/>
<path d="M1324 1019V1031M1318 1025H1330" stroke="#10240a" stroke-width="3"/>
<path d="M1346 1018H1364V1032H1346ZM1355 1032V1036M1349 1036H1361" fill="none" stroke="#fff"/><rect x="1344.5" y="1016.5" width="4.5" height="5" fill="#111" stroke="#fff"/>
<path d="M1375 1022H1379L1384 1018V1033L1379 1029H1375Z" fill="none" stroke="#fff"/><path d="M1387 1022Q1390 1025.5 1387 1029M1390 1019Q1395 1025.5 1390 1032" fill="none" stroke="#bbb"/>
<text class="m wh" x="1413" y="1031.5" style="font-size:17px">中</text>
<g transform="rotate(-12 1449 1025)"><rect x="1439" y="1016" width="20" height="18" rx="3" fill="#ef5120"/></g>
<text class="m wh" x="1449" y="1032" style="font-size:17px;font-weight:bold">S</text>
<text class="m wh" x="1543" y="1019" style="font-size:16px">12:08</text>
<text class="m wh" x="1542.5" y="1043" style="font-size:16px">2020/2/5 星期三</text>
<path d="M1630 1016H1649V1031H1638L1635 1034V1031H1630Z" fill="#fff"/>
<path d="M1633 1020H1646M1633 1023H1646M1633 1026H1642" stroke="#111"/>
<circle cx="1648" cy="1034" r="10" fill="#33373d" stroke="#555"/>
<text class="m wh" x="1648" y="1040" style="font-size:15px;font-weight:bold">1</text>
<path d="M1675.5 1000V1050" stroke="#3a3d42"/>

<!-- windows watermark -->
<text x="1367" y="919" style="font-size:22px;fill:#8f97a3;opacity:.7">激活 Windows</text>
<text x="1367" y="949" style="font-size:19px;fill:#8f97a3;opacity:.65">转到"设置"以激活 Windows。</text>

<!-- IME bar -->
<rect x="1470.5" y="947.5" width="203" height="22" fill="#fff" stroke="#b8c0c8"/>
<g transform="rotate(-12 1483 957)"><rect x="1472" y="947" width="22" height="20" rx="3" fill="#ef5120"/></g>
<text class="m wh" x="1483" y="965" style="font-size:18px;font-weight:bold">S</text>
<text class="m" x="1509" y="964" style="font-size:16px;fill:#2a7bc9;font-weight:bold">中</text>
<text class="m" x="1530" y="962" style="font-size:15px;fill:#2a7bc9;font-weight:bold">•,</text>
<circle cx="1553" cy="958" r="7" fill="#d9ecfa" stroke="#2a7bc9" stroke-width="1.5"/><path d="M1549 960Q1553 964 1557 960" fill="none" stroke="#2a7bc9"/>
<rect x="1572.5" y="950" width="5" height="11" rx="2.5" fill="#2a7bc9"/><path d="M1570 957Q1570 964 1575 964Q1580 964 1580 957M1575 964V967M1571 967H1579" fill="none" stroke="#2a7bc9"/>
<rect x="1589.5" y="952" width="15" height="11" rx="1.5" fill="#2a7bc9"/><path d="M1591.5 955H1602.5M1591.5 957.5H1602.5M1593 960.5H1601" stroke="#fff" stroke-dasharray="1.3 .8"/>
<circle cx="1619" cy="953" r="3" fill="#a9b5c2"/><path d="M1614 965Q1614 958 1619 958Q1624 958 1624 965Z" fill="#a9b5c2"/><rect x="1622" y="960" width="5" height="5" fill="#fff" stroke="#8b97a3"/>
<path d="M1634 952L1638 950H1644L1648 952L1646.5 956L1645 955V964H1637V955L1635.5 956Z" fill="#1e77c6"/>
<rect x="1656.5" y="951.5" width="5.5" height="5.5" fill="#1e77c6"/><rect x="1664" y="951.5" width="5.5" height="5.5" fill="none" stroke="#1e77c6" stroke-width="1.4"/><rect x="1656.5" y="959" width="5.5" height="5.5" fill="#1e77c6"/><rect x="1664" y="959" width="5.5" height="5.5" fill="#1e77c6"/>

<!-- Baidu watermark -->
<g filter="url(#ws)" opacity=".62">
<text x="1291" y="965" textLength="189" style="font-size:69px;font-weight:bold;fill:#fff">Baidu</text>
<ellipse cx="1425" cy="885" rx="10" ry="15" fill="#fff" fill-opacity=".35" stroke="#fff" stroke-width="2"/>
<ellipse cx="1453" cy="887" rx="11" ry="15" fill="#fff"/>
<ellipse cx="1405" cy="902" rx="10" ry="13" fill="#fff" fill-opacity=".7"/>
<ellipse cx="1470" cy="910" rx="11" ry="13" fill="#fff"/>
<path d="M1437 908C1445 908 1448 920 1458 928C1468 936 1466 950 1455 950H1418C1407 950 1405 936 1415 928C1424 920 1428 908 1437 908Z" fill="#fff" fill-opacity=".85"/>
<text x="1492" y="950" style="font-size:46px;font-weight:bold;fill:#fff;font-family:'Noto Sans CJK SC',sans-serif">经验</text>
<text x="1288" y="1004" textLength="300" style="font-size:37px;fill:#fff;stroke:#fff;stroke-width:.8">jingyan.baidu.com</text>
</g>
</svg>
</body>
</html>
